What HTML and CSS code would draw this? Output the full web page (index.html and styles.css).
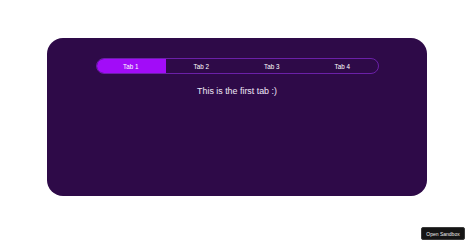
FILE: index.html
```html
<!DOCTYPE html>
<html>
<head>
<meta charset="utf-8">
<link rel="stylesheet" href="styles.css">
</head>
<body>
<div class="page">
  <div class="card">
    <div class="tabs">
      <div class="tab active">Tab 1</div>
      <div class="tab">Tab 2</div>
      <div class="tab">Tab 3</div>
      <div class="tab">Tab 4</div>
    </div>
    <p class="content">This is the first tab :)</p>
  </div>
</div>
<a class="sandbox">Open Sandbox</a>
</body>
</html>
```
FILE: styles.css
```css
html, body {
  margin: 0;
  padding: 0;
  background: #ffffff;
  font-family: "Liberation Sans", Arial, sans-serif;
}
.page {
  display: flex;
  justify-content: center;
  padding-top: 38px;
}
.card {
  width: 380px;
  height: 158px;
  box-sizing: border-box;
  background: #2e0a48;
  border-radius: 16px;
  padding-top: 20px;
  display: flex;
  flex-direction: column;
  align-items: center;
}
.tabs {
  width: 283px;
  height: 16px;
  box-sizing: border-box;
  border: 1px solid #6b20a8;
  border-radius: 8px;
  display: flex;
  overflow: hidden;
}
.tab {
  flex: 1;
  display: flex;
  align-items: center;
  justify-content: center;
  color: #ffffff;
  font-size: 6.3px;
}
.tab.active {
  background: #a20cf8;
  border-radius: 8px 0 0 8px;
  margin: -1px 0 -1px -1px;
}
.content {
  margin: 12px 0 0;
  color: #efe6f7;
  font-size: 8.9px;
}
.sandbox {
  position: fixed;
  right: 9px;
  bottom: 8px;
  width: 44px;
  height: 13px;
  box-sizing: border-box;
  background: #151515;
  border: 1px solid #3a3a3a;
  border-radius: 2px;
  color: #f0f0f0;
  font-size: 5px;
  display: flex;
  align-items: center;
  justify-content: center;
}
```
